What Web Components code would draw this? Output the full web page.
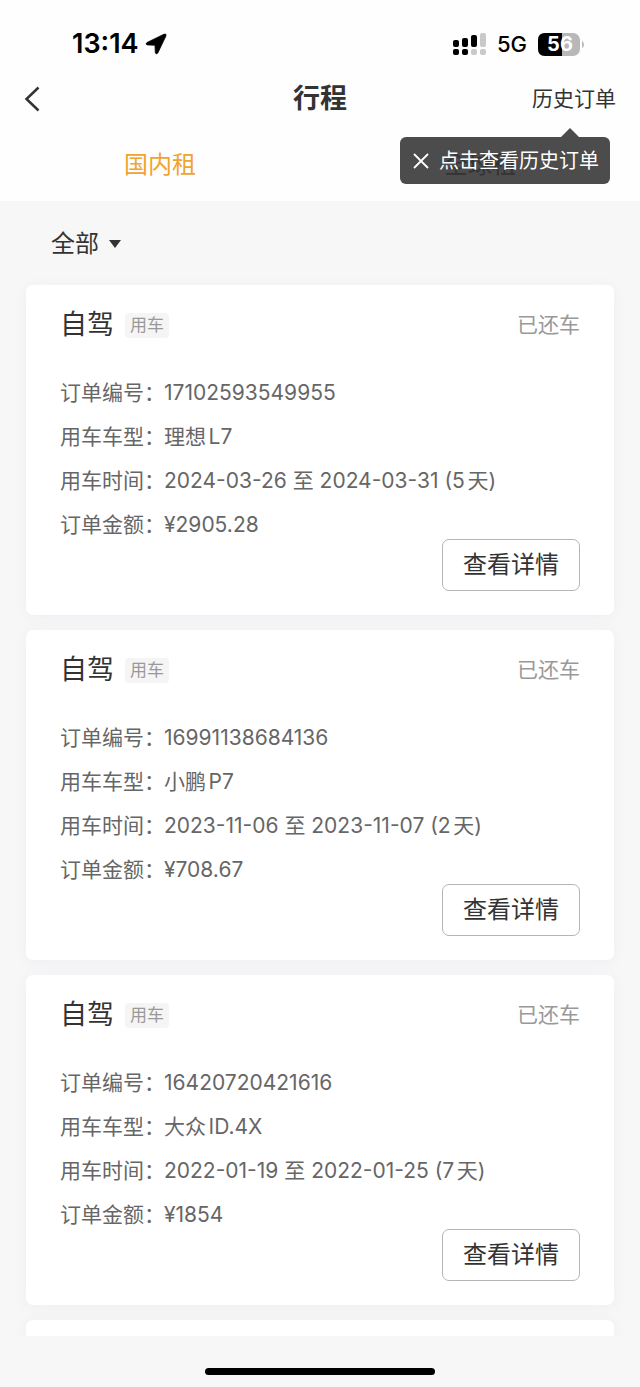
<!DOCTYPE html>
<html lang="zh-CN">
<head>
<meta charset="utf-8">
<meta name="viewport" content="width=device-width, initial-scale=1">
<title>行程</title>
<style>
html, body { margin: 0; }
body {
  --ink: #333;
  --body: #666;
  --muted: #999;
  --accent: #f0a32f;
  --page: #f7f7f8;
  background: var(--page);
  color: var(--ink);
  font-family: Inter, "Noto Sans CJK SC", sans-serif;
  text-autospace: normal;
}
</style>
</head>
<body>
<trip-app></trip-app>

<template id="status-bar">
  <style>
    :host { display: flex; justify-content: space-between; align-items: center; height: 70px; padding: 18px 56px 0 72px; box-sizing: border-box; color: #000; }
    div { display: flex; align-items: center; }
    .time { font-size: 27px; font-weight: 600; line-height: 32px; gap: 6px; }
    .net { font-size: 22px; font-weight: 500; line-height: 32px; gap: 11px; }
    .battery { position: relative; width: 46px; height: 23px; }
    .battery svg { display: block; }
    .battery span { position: absolute; inset: 0 2px 0 0; text-align: center; color: #fff; font-size: 20px; font-weight: 700; line-height: 23px; }
    svg { flex: none; }
  </style>
  <div class="time"><span>13:14</span>
    <svg width="22" height="22" viewBox="0 0 22 22" aria-hidden="true"><path d="M2 9.500 19 1.200Q21.800.4 20.900 3L12.800 20Q11 22 10.300 19.500L10 12.200 2.500 11.900Q-.2 11 2 9.500Z" fill="#000" stroke="#000" stroke-width=".8" stroke-linejoin="round"/></svg>
  </div>
  <div class="net">
    <svg width="33" height="23" viewBox="0 0 33 23" aria-hidden="true">
      <g fill="#000"><rect x="0" y="7" width="6" height="7" rx="2"/><rect x="9" y="5" width="6" height="9" rx="2"/><rect x="18" y="2" width="6" height="12" rx="2"/><rect x="0" y="16" width="6" height="6" rx="2"/><rect x="9" y="16" width="6" height="6" rx="2"/></g>
      <g fill="#c9c9c9"><rect x="27" y="0" width="6" height="14" rx="2"/><rect x="18" y="16" width="6" height="6" rx="2"/><rect x="27" y="16" width="6" height="6" rx="2"/></g>
    </svg>
    <span>5G</span>
    <div class="battery">
      <svg width="46" height="23" viewBox="0 0 46 23" aria-hidden="true"><rect width="42" height="23" rx="7" fill="#b8b8b8"/><path d="M7 0H24V23H7Q0 23 0 16V7Q0 0 7 0Z" fill="#000"/><path d="M44 8Q46 9 46 11.500T44 15Z" fill="#b8b8b8"/></svg>
      <span>56</span>
    </div>
  </div>
</template>

<template id="nav-bar">
  <style>
    :host { display: grid; grid-template-columns: 1fr auto 1fr; align-items: center; height: 58px; padding: 0 24px; position: relative; }
    button { border: 0; padding: 0; background: none; justify-self: start; display: flex; color: inherit; }
    h1 { margin: 0; font-size: 27px; line-height: 32px; font-weight: 700; }
    a { justify-self: end; color: inherit; text-decoration: none; font-size: 21px; line-height: 32px; }
    ::slotted(hint-bubble) { position: absolute; right: 30px; top: 67px; z-index: 1; }
  </style>
  <button type="button" aria-label="返回"><svg width="17" height="26" viewBox="0 0 17 26" fill="none" stroke="currentColor" stroke-width="2.500" aria-hidden="true"><path d="M14.500 1.500 2.500 13 14.500 24.500"/></svg></button>
  <h1><slot></slot></h1>
  <a href="#history">历史订单</a>
  <slot name="hint"></slot>
</template>

<template id="hint-bubble">
  <style>
    :host { display: flex; align-items: center; gap: 10px; height: 47px; padding: 0 11px 0 13px; border-radius: 6px; background: rgba(51,51,51,.88); color: #fff; font-size: 20px; line-height: 28px; white-space: nowrap; }
    :host::before { content: ""; position: absolute; right: 31px; bottom: 100%; border: solid transparent; border-width: 0 9px 9px; border-bottom-color: rgba(51,51,51,.88); }
    button { border: 0; padding: 0; background: none; color: inherit; display: flex; }
  </style>
  <button type="button" aria-label="关闭"><svg width="16" height="16" viewBox="0 0 16 16" stroke="currentColor" stroke-width="1.800" aria-hidden="true"><path d="M1 1 15 15M15 1 1 15"/></svg></button>
  <span><slot></slot></span>
</template>

<template id="rent-tabs">
  <style>
    :host { display: grid; grid-template-columns: 1fr 1fr; height: 73px; }
    button { border: 0; padding: 0; background: none; font: 24px/32px Inter, "Noto Sans CJK SC", sans-serif; color: var(--ink); }
    button[aria-selected=true] { color: var(--accent); }
  </style>
  <button type="button" role="tab" aria-selected="true">国内租</button>
  <button type="button" role="tab" aria-selected="false">全球租</button>
</template>

<template id="order-filter">
  <style>
    :host { display: flex; align-items: center; gap: 10px; height: 84px; padding: 2px 0 0 25px; box-sizing: border-box; }
    select { appearance: none; border: 0; margin: 0; padding: 0; background: none; color: var(--ink); font: 24px/32px Inter, "Noto Sans CJK SC", sans-serif; }
  </style>
  <select aria-label="订单筛选"><option>全部</option></select>
  <svg width="12" height="8" viewBox="0 0 12 8" aria-hidden="true"><path d="M0 0H12L6 8Z" fill="#333"/></svg>
</template>

<template id="card-box">
  <style>
    :host { display: block; background: #fff; border-radius: 7px; box-shadow: 0 2px 14px rgba(60,80,100,.05); }
  </style>
  <slot></slot>
</template>

<template id="order-card">
  <style>
    :host { display: block; }
    article { padding: 24px 34px; }
    header { display: flex; align-items: center; height: 32px; margin-bottom: 38px; }
    h2 { margin: 0 11px 0 0; font-size: 27px; line-height: 32px; font-weight: 400; }
    .tag { padding: 0 5px; border-radius: 4px; background: #f5f5f5; color: var(--muted); font-size: 17px; line-height: 25px; }
    .state { margin-left: auto; color: var(--muted); font-size: 21px; line-height: 28px; }
    dl { display: grid; gap: 16px; margin: 0; font-size: 21px; line-height: 28px; color: var(--body); }
    dl div { display: flex; }
    dt { flex: none; width: 104px; white-space: nowrap; }
    dd { margin: 0; }
    button { display: block; margin-left: auto; height: 52px; padding: 0 20px; border: 1px solid #b5b5b5; border-radius: 7px; background: #fff; color: var(--ink); font: 24px/32px Inter, "Noto Sans CJK SC", sans-serif; }
  </style>
  <card-box>
    <article>
      <header><h2>自驾</h2><span class="tag">用车</span><span class="state">已还车</span></header>
      <dl>
        <div><dt>订单编号：</dt><dd><slot name="number"></slot></dd></div>
        <div><dt>用车车型：</dt><dd><slot name="model"></slot></dd></div>
        <div><dt>用车时间：</dt><dd><slot name="period"></slot></dd></div>
        <div><dt>订单金额：</dt><dd><slot name="amount"></slot></dd></div>
      </dl>
      <button type="button">查看详情</button>
    </article>
  </card-box>
</template>

<template id="trip-app">
  <style>
    :host { display: flex; flex-direction: column; height: 100vh; }
    .top { flex: none; background: #fefefe; }
    main { flex: 1; min-height: 0; overflow: hidden; padding: 0 26px; }
    .list { display: grid; gap: 15px; }
    .next { height: 330px; }
    footer { flex: none; display: flex; justify-content: center; align-items: center; height: 51px; padding-top: 19px; box-sizing: border-box; }
    footer i { width: 36%; height: 7px; border-radius: 4px; background: #000; }
  </style>
  <div class="top">
    <status-bar></status-bar>
    <nav-bar>行程<hint-bubble slot="hint">点击查看历史订单</hint-bubble></nav-bar>
    <rent-tabs role="tablist"></rent-tabs>
  </div>
  <main>
    <order-filter></order-filter>
    <div class="list">
      <order-card><span slot="number">17102593549955</span><span slot="model">理想L7</span><span slot="period">2024-03-26 至 2024-03-31 (5天)</span><span slot="amount">¥2905.28</span></order-card>
      <order-card><span slot="number">16991138684136</span><span slot="model">小鹏P7</span><span slot="period">2023-11-06 至 2023-11-07 (2天)</span><span slot="amount">¥708.67</span></order-card>
      <order-card><span slot="number">16420720421616</span><span slot="model">大众ID.4X</span><span slot="period">2022-01-19 至 2022-01-25 (7天)</span><span slot="amount">¥1854</span></order-card>
      <card-box class="next"></card-box>
    </div>
  </main>
  <footer><i></i></footer>
</template>

<script>
for (const name of ["status-bar", "nav-bar", "hint-bubble", "rent-tabs", "order-filter", "card-box", "order-card", "trip-app"]) {
  customElements.define(name, class extends HTMLElement {
    constructor() {
      super();
      this.attachShadow({ mode: "open" }).append(document.getElementById(name).content.cloneNode(true));
    }
  });
}
</script>
</body>
</html>
